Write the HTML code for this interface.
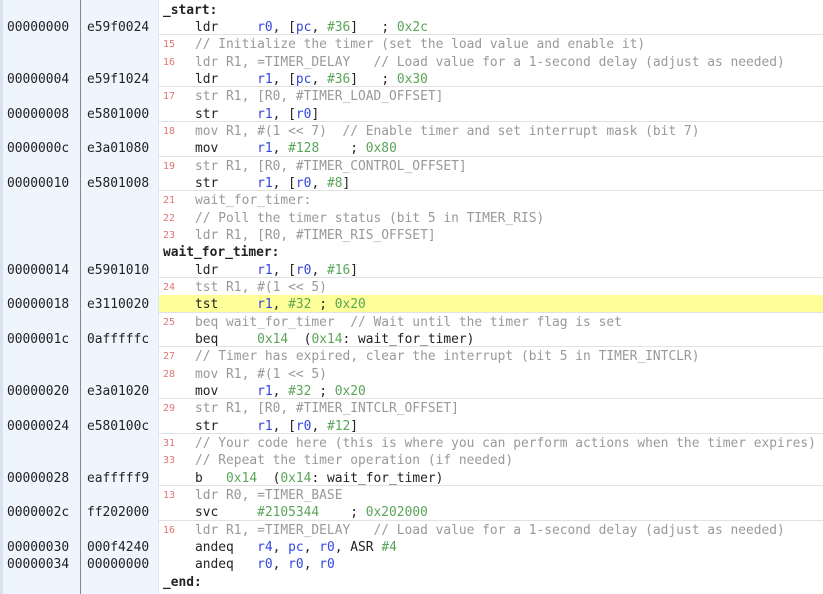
<!DOCTYPE html>
<html><head><meta charset="utf-8"><style>
body{margin:0;width:823px;height:594px;overflow:hidden;background:#fff;font-family:"DejaVu Sans Mono","Liberation Mono",monospace;font-size:12.9px}
.l{position:absolute;left:0;top:0;width:158px;height:594px;background:#eef5fd;}
.l:before{content:"";position:absolute;left:0;top:0;width:3px;height:594px;background:#d6e2ee}
.v1{position:absolute;left:80px;top:0;width:1px;height:594px;background:#888}
.v2{position:absolute;left:158px;top:0;width:1px;height:594px;background:#dde6ee}
.r{position:absolute;left:0;width:823px;height:17.33px;line-height:17.33px;white-space:pre;color:#222;margin-top:1.5px}
.a{position:absolute;left:7px}
.h{position:absolute;left:87px}
.n{position:absolute;left:163px;font-size:10px;color:#e07575}
.c{position:absolute;left:195px}
.lb{position:absolute;left:163px;font-weight:bold;color:#222}
.g{color:#999}
.b{color:#3346e0}
.k{color:#5aa55a}
.hl{background:#ffff99;left:159px;width:664px;margin-top:0}
.s{position:absolute;left:159px;width:664px;height:0;border-top:1px solid #e2e2e2}
</style></head><body>
<div class="l"></div><div class="v1"></div><div class="v2"></div>
<div class="r hl" style="top:294.67px"></div>
<div class="r" style="top:0px"><span class="lb">_start:</span></div>
<div class="r" style="top:17.33px"><span class="a">00000000</span><span class="h">e59f0024</span><span class="c">ldr     <span class="b">r0</span>, [<span class="b">pc</span>, <span class="k">#36</span>]   ; <span class="k">0x2c</span></span></div>
<div class="r" style="top:34.67px"><span class="n">15</span><span class="c g">// Initialize the timer (set the load value and enable it)</span></div>
<div class="r" style="top:52px"><span class="n">16</span><span class="c g">ldr R1, =TIMER_DELAY   // Load value for a 1-second delay (adjust as needed)</span></div>
<div class="r" style="top:69.33px"><span class="a">00000004</span><span class="h">e59f1024</span><span class="c">ldr     <span class="b">r1</span>, [<span class="b">pc</span>, <span class="k">#36</span>]   ; <span class="k">0x30</span></span></div>
<div class="r" style="top:86.67px"><span class="n">17</span><span class="c g">str R1, [R0, #TIMER_LOAD_OFFSET]</span></div>
<div class="r" style="top:104px"><span class="a">00000008</span><span class="h">e5801000</span><span class="c">str     <span class="b">r1</span>, [<span class="b">r0</span>]</span></div>
<div class="r" style="top:121.33px"><span class="n">18</span><span class="c g">mov R1, #(1 &lt;&lt; 7)  // Enable timer and set interrupt mask (bit 7)</span></div>
<div class="r" style="top:138.67px"><span class="a">0000000c</span><span class="h">e3a01080</span><span class="c">mov     <span class="b">r1</span>, <span class="k">#128</span>    ; <span class="k">0x80</span></span></div>
<div class="r" style="top:156px"><span class="n">19</span><span class="c g">str R1, [R0, #TIMER_CONTROL_OFFSET]</span></div>
<div class="r" style="top:173.33px"><span class="a">00000010</span><span class="h">e5801008</span><span class="c">str     <span class="b">r1</span>, [<span class="b">r0</span>, <span class="k">#8</span>]</span></div>
<div class="r" style="top:190.67px"><span class="n">21</span><span class="c g">wait_for_timer:</span></div>
<div class="r" style="top:208px"><span class="n">22</span><span class="c g">// Poll the timer status (bit 5 in TIMER_RIS)</span></div>
<div class="r" style="top:225.33px"><span class="n">23</span><span class="c g">ldr R1, [R0, #TIMER_RIS_OFFSET]</span></div>
<div class="r" style="top:242.67px"><span class="lb">wait_for_timer:</span></div>
<div class="r" style="top:260px"><span class="a">00000014</span><span class="h">e5901010</span><span class="c">ldr     <span class="b">r1</span>, [<span class="b">r0</span>, <span class="k">#16</span>]</span></div>
<div class="r" style="top:277.33px"><span class="n">24</span><span class="c g">tst R1, #(1 &lt;&lt; 5)</span></div>
<div class="r" style="top:294.67px"><span class="a">00000018</span><span class="h">e3110020</span><span class="c">tst     <span class="b">r1</span>, <span class="k">#32</span> ; <span class="k">0x20</span></span></div>
<div class="r" style="top:312px"><span class="n">25</span><span class="c g">beq wait_for_timer  // Wait until the timer flag is set</span></div>
<div class="r" style="top:329.33px"><span class="a">0000001c</span><span class="h">0afffffc</span><span class="c">beq     <span class="k">0x14</span>  (<span class="k">0x14</span>: wait_for_timer)</span></div>
<div class="r" style="top:346.67px"><span class="n">27</span><span class="c g">// Timer has expired, clear the interrupt (bit 5 in TIMER_INTCLR)</span></div>
<div class="r" style="top:364px"><span class="n">28</span><span class="c g">mov R1, #(1 &lt;&lt; 5)</span></div>
<div class="r" style="top:381.33px"><span class="a">00000020</span><span class="h">e3a01020</span><span class="c">mov     <span class="b">r1</span>, <span class="k">#32</span> ; <span class="k">0x20</span></span></div>
<div class="r" style="top:398.67px"><span class="n">29</span><span class="c g">str R1, [R0, #TIMER_INTCLR_OFFSET]</span></div>
<div class="r" style="top:416px"><span class="a">00000024</span><span class="h">e580100c</span><span class="c">str     <span class="b">r1</span>, [<span class="b">r0</span>, <span class="k">#12</span>]</span></div>
<div class="r" style="top:433.33px"><span class="n">31</span><span class="c g">// Your code here (this is where you can perform actions when the timer expires)</span></div>
<div class="r" style="top:450.67px"><span class="n">33</span><span class="c g">// Repeat the timer operation (if needed)</span></div>
<div class="r" style="top:468px"><span class="a">00000028</span><span class="h">eafffff9</span><span class="c">b   <span class="k">0x14</span>  (<span class="k">0x14</span>: wait_for_timer)</span></div>
<div class="r" style="top:485.33px"><span class="n">13</span><span class="c g">ldr R0, =TIMER_BASE</span></div>
<div class="r" style="top:502.67px"><span class="a">0000002c</span><span class="h">ff202000</span><span class="c">svc     <span class="k">#2105344</span>    ; <span class="k">0x202000</span></span></div>
<div class="r" style="top:520px"><span class="n">16</span><span class="c g">ldr R1, =TIMER_DELAY   // Load value for a 1-second delay (adjust as needed)</span></div>
<div class="r" style="top:537.33px"><span class="a">00000030</span><span class="h">000f4240</span><span class="c">andeq   <span class="b">r4</span>, <span class="b">pc</span>, <span class="b">r0</span>, ASR <span class="k">#4</span></span></div>
<div class="r" style="top:554.67px"><span class="a">00000034</span><span class="h">00000000</span><span class="c">andeq   <span class="b">r0</span>, <span class="b">r0</span>, <span class="b">r0</span></span></div>
<div class="r" style="top:572px"><span class="lb">_end:</span></div>
<div class="s" style="top:34px"></div>
<div class="s" style="top:86px"></div>
<div class="s" style="top:121px"></div>
<div class="s" style="top:156px"></div>
<div class="s" style="top:190px"></div>
<div class="s" style="top:277px"></div>
<div class="s" style="top:312px"></div>
<div class="s" style="top:346px"></div>
<div class="s" style="top:398px"></div>
<div class="s" style="top:433px"></div>
<div class="s" style="top:485px"></div>
<div class="s" style="top:520px"></div>
</body></html>
